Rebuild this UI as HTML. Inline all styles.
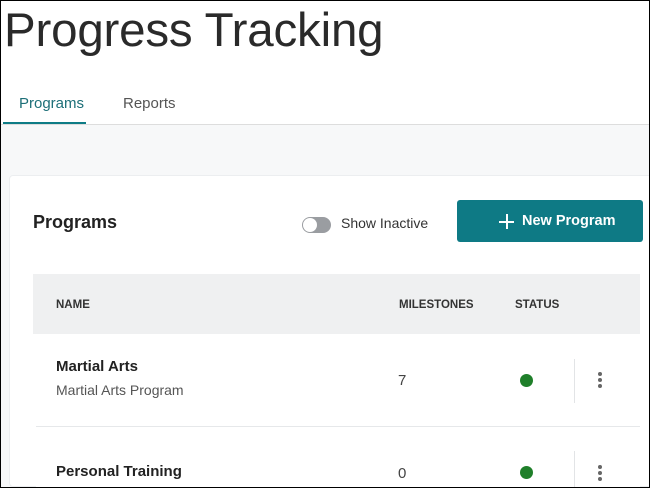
<!DOCTYPE html>
<html style="width:650px;height:488px;overflow:hidden"><head><style>
*{margin:0;padding:0;box-sizing:border-box}
body{width:650px;height:488px;overflow:hidden;position:relative;background:#fff;font-family:"Liberation Sans",sans-serif;color:#222}
.frame{position:absolute;left:0;top:0;width:650px;height:488px;border:1px solid #000;z-index:10;pointer-events:none}
.title{position:absolute;left:4px;top:3px;font-size:47.5px;letter-spacing:-0.2px;color:#2a2a2a;font-weight:normal}
.tab{position:absolute;top:95px;font-size:15px}
.ul{position:absolute;left:3px;top:122px;width:83px;height:2px;background:#0e7c86}
.div{position:absolute;left:1px;top:124px;width:648px;height:1px;background:#ddd}
.bg{position:absolute;left:1px;top:125px;width:648px;height:362px;background:#f7f8f9}
.card{position:absolute;left:9px;top:175px;width:660px;height:330px;background:#fff;border-radius:4px;border:1px solid #eceef0}
.h{position:absolute;left:33px;top:212px;font-size:18px;font-weight:bold;color:#222}
.tog{position:absolute;left:302px;top:217px;width:29px;height:16px;border-radius:8px;background:#9a9da1}
.tog::after{content:"";position:absolute;left:1px;top:1px;width:14px;height:14px;border-radius:50%;background:#fff}
.si{position:absolute;left:341px;top:215px;font-size:14px;color:#333}
.btn{position:absolute;left:457px;top:200px;width:186px;height:42px;background:#0e7a85;border-radius:3px;color:#fff;font-size:14.5px;font-weight:bold}
.btn span{position:absolute;left:65px;top:13px}
.plus1{position:absolute;left:499px;top:221px;width:15px;height:1.5px;background:#fff}
.plus2{position:absolute;left:506px;top:214px;width:1.5px;height:15px;background:#fff}
.th{position:absolute;left:33px;top:274px;width:607px;height:60px;background:#eff0f1}
.thl{position:absolute;top:299px;font-size:11.5px;font-weight:bold;color:#333}
.row{position:absolute;left:36px;width:604px;background:#fff;border-bottom:1px solid #e6e8ea}
.n{position:absolute;left:56px;font-size:15px;font-weight:bold;color:#222}
.s{position:absolute;left:56px;font-size:14px;color:#555}
.num{position:absolute;left:398px;font-size:15px;color:#444}
.dot{position:absolute;left:520px;width:13px;height:13px;border-radius:50%;background:#1f7f2a}
.vs{position:absolute;left:574px;width:1px;height:44px;background:#e2e4e6}
.k{position:absolute;left:598px;width:4px}
.k i{display:block;width:4px;height:4px;border-radius:50%;background:#666;margin-bottom:2px}
</style></head><body>
<div class="title">Progress Tracking</div>
<div class="tab" style="left:19px;color:#1d6f78">Programs</div>
<div class="tab" style="left:123px;color:#555">Reports</div>
<div class="bg"></div>
<div class="div"></div>
<div class="ul"></div>
<div class="card" style="height:312px"></div>
<div class="h">Programs</div>
<div class="tog"></div>
<div class="si">Show Inactive</div>
<div class="btn"><span>New Program</span></div>
<div class="plus1"></div><div class="plus2"></div>
<div class="th"></div>
<div class="thl" style="left:56px">NAME</div>
<div class="thl" style="left:399px">MILESTONES</div>
<div class="thl" style="left:515px">STATUS</div>
<div class="row" style="top:334px;height:93px"></div>
<div class="row" style="top:427px;height:60px;border-bottom:none"></div>
<div class="n" style="top:358px">Martial Arts</div>
<div class="s" style="top:382px">Martial Arts Program</div>
<div class="num" style="top:372px">7</div>
<div class="dot" style="top:374px"></div>
<div class="vs" style="top:359px"></div>
<div class="k" style="top:372px"><i></i><i></i><i></i></div>
<div class="n" style="top:463px">Personal Training</div>
<div class="num" style="top:465px">0</div>
<div class="dot" style="top:466px"></div>
<div class="vs" style="top:451px;height:36px"></div>
<div class="k" style="top:465px"><i></i><i></i><i></i></div>
<div class="frame"></div>
</body></html>
